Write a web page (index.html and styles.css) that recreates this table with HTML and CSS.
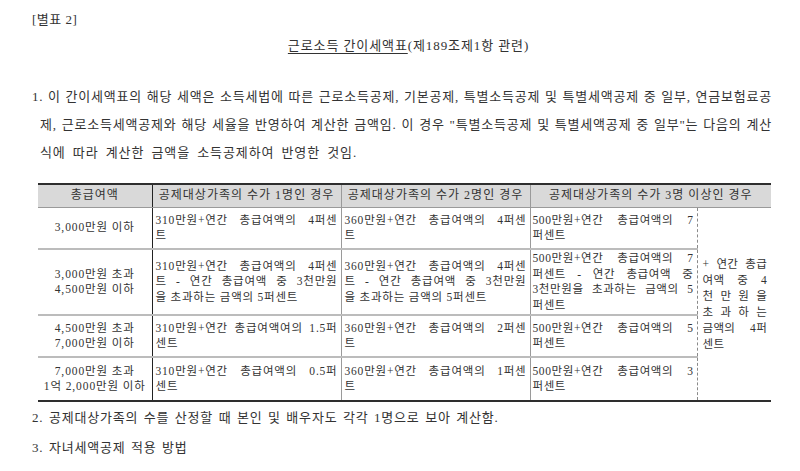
FILE: index.html
```html
<!DOCTYPE html>
<html lang="ko">
<head>
<meta charset="utf-8">
<title>근로소득 간이세액표</title>
<link rel="stylesheet" href="styles.css">
</head>
<body>
<div class="page">
  <div class="label">[별표 2]</div>
  <div class="title"><span class="u">근로소득 간이세액표</span>(제189조제1항 관련)</div>
  <div class="item">
    <span class="j first">1. 이 간이세액표의 해당 세액은 소득세법에 따른 근로소득공제, 기본공제, 특별소득공제 및 특별세액공제 중 일부, 연금보험료공</span>
    <span class="j">제, 근로소득세액공제와 해당 세율을 반영하여 계산한 금액임. 이 경우 "특별소득공제 및 특별세액공제 중 일부"는 다음의 계산</span>
    <span class="l last-line">식에 따라 계산한 금액을 소득공제하여 반영한 것임.</span>
  </div>
  <table class="tax">
    <colgroup>
      <col class="w1"><col class="w2"><col class="w2"><col class="w4"><col class="w5">
    </colgroup>
    <thead>
      <tr>
        <th class="c1">총급여액</th>
        <th>공제대상가족의 수가 1명인 경우</th>
        <th>공제대상가족의 수가 2명인 경우</th>
        <th colspan="2" class="last">공제대상가족의 수가 3명 이상인 경우</th>
      </tr>
    </thead>
    <tbody>
      <tr class="r1">
        <td class="c1">3,000만원 이하</td>
        <td class="cw"><span class="j">310만원+연간 총급여액의 4퍼센</span><span class="l">트</span></td>
        <td class="cw"><span class="j">360만원+연간 총급여액의 4퍼센</span><span class="l">트</span></td>
        <td class="c4"><span class="j">500만원+연간 총급여액의 7</span><span class="l">퍼센트</span></td>
        <td class="m" rowspan="4">
          <span class="j">+ 연간 총급</span>
          <span class="j">여액 중 4</span>
          <span class="j">천 만 원 을</span>
          <span class="j">초 과 하 는</span>
          <span class="j">금액의 4퍼</span>
          <span class="l">센트</span>
        </td>
      </tr>
      <tr class="r2">
        <td class="c1">3,000만원 초과<br>4,500만원 이하</td>
        <td class="cw"><span class="j">310만원+연간 총급여액의 4퍼센</span><span class="j">트 - 연간 총급여액 중 3천만원</span><span class="l">을 초과하는 금액의 5퍼센트</span></td>
        <td class="cw"><span class="j">360만원+연간 총급여액의 4퍼센</span><span class="j">트 - 연간 총급여액 중 3천만원</span><span class="l">을 초과하는 금액의 5퍼센트</span></td>
        <td class="c4"><span class="j">500만원+연간 총급여액의 7</span><span class="j">퍼센트 - 연간 총급여액 중</span><span class="j">3천만원을 초과하는 금액의 5</span><span class="l">퍼센트</span></td>
      </tr>
      <tr class="r3">
        <td class="c1">4,500만원 초과<br>7,000만원 이하</td>
        <td class="cw"><span class="j">310만원+연간 총급여액여의 1.5퍼</span><span class="l">센트</span></td>
        <td class="cw"><span class="j">360만원+연간 총급여액의 2퍼센</span><span class="l">트</span></td>
        <td class="c4"><span class="j">500만원+연간 총급여액의 5</span><span class="l">퍼센트</span></td>
      </tr>
      <tr class="r4">
        <td class="c1">7,000만원 초과<br>1억 2,000만원 이하</td>
        <td class="cw"><span class="j">310만원+연간 총급여액의 0.5퍼</span><span class="l">센트</span></td>
        <td class="cw"><span class="j">360만원+연간 총급여액의 1퍼센</span><span class="l">트</span></td>
        <td class="c4"><span class="j">500만원+연간 총급여액의 3</span><span class="l">퍼센트</span></td>
      </tr>
    </tbody>
  </table>
  <div class="note">2. 공제대상가족의 수를 산정할 때 본인 및 배우자도 각각 1명으로 보아 계산함.</div>
  <div class="note">3. 자녀세액공제 적용 방법</div>
</div>
</body>
</html>
```

FILE: styles.css
```css
html, body {
  margin: 0;
  padding: 0;
  background: #ffffff;
}

body {
  color: #333333;
  font-family: "Liberation Serif", "Noto Sans CJK KR", serif;
  font-size: 13px;
}

.page {
  padding: 6px 28px 0 32px;
}

.label {
  line-height: 28px;
  letter-spacing: 0.5px;
}

.title {
  line-height: 28px;
  margin-top: -2px;
  padding-left: 13px;
  text-align: center;
  letter-spacing: 0.9px;
}

.u {
  text-decoration: underline;
  text-decoration-thickness: 1px;
  text-underline-offset: 3px;
}

.item {
  margin-top: 23px;
  padding-left: 8px;
  line-height: 28px;
  letter-spacing: 0.8px;
}

.j,
.l {
  display: block;
}

.j {
  text-align: justify;
  text-align-last: justify;
}

.first {
  margin-left: -8px;
}

.last-line {
  letter-spacing: 0.9px;
  word-spacing: 3px;
}

.tax {
  margin: 16px 0 0 6px;
  width: 733px;
  border-collapse: collapse;
  table-layout: fixed;
  font-size: 11.5px;
  line-height: 15.5px;
  letter-spacing: 0.6px;
}

.w1 { width: 114px; }
.w2 { width: 189px; }
.w4 { width: 167px; }
.w5 { width: 74px; }

.tax th {
  height: 22px;
  padding: 0 2px;
  background: #d9d9d9;
  font-size: 12px;
  font-weight: normal;
  letter-spacing: 1px;
  text-align: center;
  vertical-align: middle;
  border-top: 2px solid #2e2e2e;
  border-bottom: 1px solid #9a9a9a;
  border-right: 1px solid #9a9a9a;
}

.tax th.last {
  border-right: none;
}

.tax th.c1,
.tax td.c1 {
  border-right: 1px solid #222222;
}

.tax td {
  padding: 1px 3px 1px 3px;
  vertical-align: middle;
  border-bottom: 2px solid #bcbcbc;
  border-right: 1px solid #9a9a9a;
}

.tax td.cw {
  letter-spacing: 0.8px;
}

.tax td.c1 {
  text-align: center;
  letter-spacing: 0.9px;
}

.tax td.c4 {
  padding: 1px 3px 1px 2px;
  border-right: 1px dashed #8a8a8a;
}

.tax td.m {
  padding: 0 4px 0 5px;
  line-height: 16px;
  letter-spacing: 0.3px;
  border-right: none;
  border-bottom: 2px solid #2e2e2e;
}

.tax .r1 td { height: 38px; }
.tax .r2 td { height: 57px; }
.tax .r3 td { height: 38px; }
.tax .r4 td { height: 40px; }

.tax .r4 td {
  border-bottom: 2px solid #2e2e2e;
}

.note {
  line-height: 30px;
  letter-spacing: 0.8px;
  word-spacing: 1.5px;
}

.tax + .note {
  margin-top: 1px;
}
```
